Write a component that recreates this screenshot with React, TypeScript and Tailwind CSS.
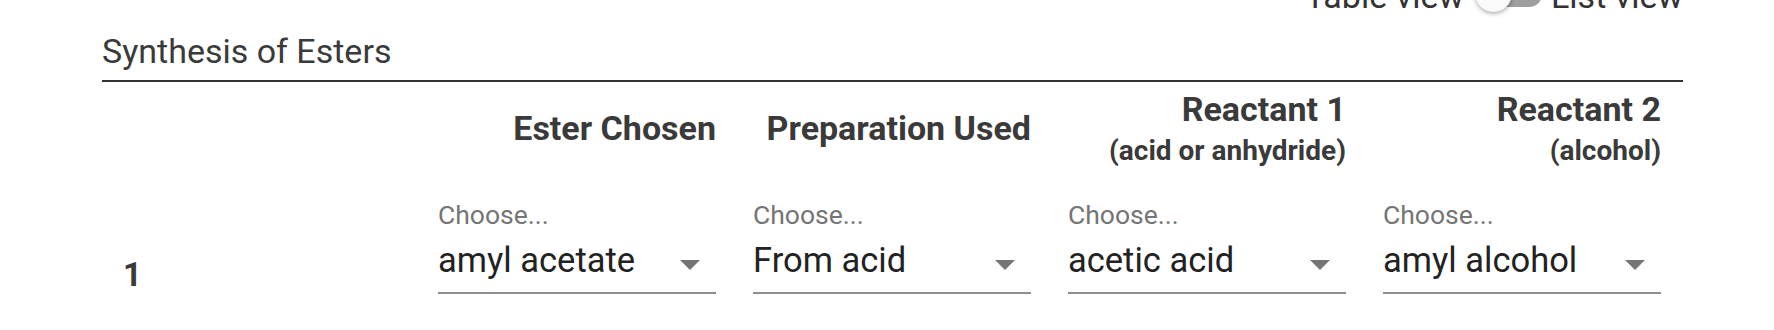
import React from 'react';

const columns = [
  { title: 'Ester Chosen', sub: '', value: 'amyl acetate' },
  { title: 'Preparation Used', sub: '', value: 'From acid' },
  { title: 'Reactant 1', sub: '(acid or anhydride)', value: 'acetic acid' },
  { title: 'Reactant 2', sub: '(alcohol)', value: 'amyl alcohol' },
];

function SelectField({ value }: { value: string }) {
  return (
    <div className="w-[278px] pt-[29px]">
      <div className="text-[26.5px] leading-[24px] text-[#757575]">Choose...</div>
      <div className="relative mt-[16px] border-b-2 border-[#8e8e8e] pb-[15px]">
        <div className="text-[34.5px] leading-[34px] text-[#222]">{value}</div>
        <svg
          className="absolute right-[16px] top-[17px]"
          width="20"
          height="10"
          viewBox="0 0 20 10"
        >
          <path d="M0 0 L20 0 L10 10 Z" fill="#757575" />
        </svg>
      </div>
    </div>
  );
}

export default function App() {
  return (
    <div
      className="h-[330px] w-full overflow-hidden bg-white pl-[102px] pr-[91px] text-[#3a3a3a]"
      style={{ fontFamily: 'Roboto, "Noto Sans", sans-serif' }}
    >
      {/* view toggle, mostly scrolled out of sight */}
      <div className="-mt-[26px] flex h-[40px] items-center justify-end text-[34px] text-[#333]">
        <span className="pt-[5px]">Table view</span>
        <div className="relative mr-[9px] ml-[15px] h-[26px] w-[63px] rounded-full bg-[#9e9e9e]">
          <div className="absolute -left-[4px] -top-[6px] h-[37px] w-[37px] rounded-full bg-[#fafafa] shadow-[0_2px_4px_rgba(0,0,0,0.3)]" />
        </div>
        <span className="pt-[5px]">List view</span>
      </div>

      <div className="mt-[16px] border-b-2 border-[#333] pb-[8px] text-[34px] leading-[42px]">
        Synthesis of Esters
      </div>

      <div className="grid grid-cols-[299px_278px_278px_278px_278px] gap-x-[37px]">
        <div className="h-[92px]" />
        {columns.map((c) => (
          <div
            key={c.title}
            className={`flex h-[92px] flex-col items-end justify-center text-right font-bold ${c.sub ? 'pt-[4px]' : ''}`}
          >
            <div className="text-[34px] leading-[38px]">{c.title}</div>
            {c.sub && <div className="mt-[4px] text-[28px] leading-[38px]">{c.sub}</div>}
          </div>
        ))}

        <div className="pl-[21px] pt-[82px] text-[33px] font-bold leading-[38px]">1</div>
        {columns.map((c) => (
          <SelectField key={c.title} value={c.value} />
        ))}
      </div>
    </div>
  );
}
